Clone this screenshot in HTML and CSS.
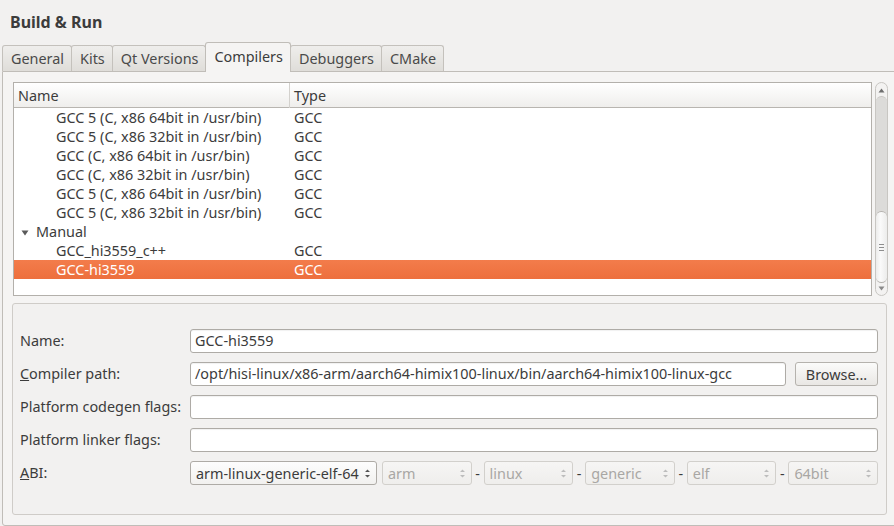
FILE: index.html
```html
<!DOCTYPE html>
<html lang="en">
<head>
    <meta charset="UTF-8">
    <title>Build &amp; Run</title>
    <link rel="stylesheet" href="styles.css">
</head>
<body>
<h1 class="title">Build &amp; Run</h1>

<!-- tab bar -->
<div class="tabs">
    <div class="tab">General</div>
    <div class="tab">Kits</div>
    <div class="tab">Qt Versions</div>
    <div class="tab active">Compilers</div>
    <div class="tab">Debuggers</div>
    <div class="tab">CMake</div>
</div>

<div class="pane">
    <div class="listbox">
        <div class="tree">
            <div class="thead">
                <div class="th name-col">Name</div>
                <div class="th">Type</div>
            </div>
            <div class="row"><div class="cell child">GCC 5 (C, x86 64bit in /usr/bin)</div><div class="cell">GCC</div></div>
            <div class="row"><div class="cell child">GCC 5 (C, x86 32bit in /usr/bin)</div><div class="cell">GCC</div></div>
            <div class="row"><div class="cell child">GCC (C, x86 64bit in /usr/bin)</div><div class="cell">GCC</div></div>
            <div class="row"><div class="cell child">GCC (C, x86 32bit in /usr/bin)</div><div class="cell">GCC</div></div>
            <div class="row"><div class="cell child">GCC 5 (C, x86 64bit in /usr/bin)</div><div class="cell">GCC</div></div>
            <div class="row"><div class="cell child">GCC 5 (C, x86 32bit in /usr/bin)</div><div class="cell">GCC</div></div>
            <div class="row">
                <div class="cell group"><svg class="expander" width="8" height="6" viewBox="0 0 8 6"><path d="M0.5 0.5 L7.5 0.5 L4 5.5 Z" fill="#5a5a5a"/></svg>Manual</div>
                <div class="cell"></div>
            </div>
            <div class="row"><div class="cell child">GCC_hi3559_c++</div><div class="cell">GCC</div></div>
            <div class="row selected"><div class="cell child">GCC-hi3559</div><div class="cell">GCC</div></div>
        </div>

        <!-- vertical scrollbar -->
        <div class="scrollbar">
            <svg class="sb-arrow" width="7" height="5" viewBox="0 0 7 5"><path d="M0.5 4.5 L3.5 0.5 L6.5 4.5 Z" fill="#6e6e6e"/></svg>
            <div class="trough"></div>
            <div class="thumb">
                <span class="grip"></span>
                <span class="grip"></span>
                <span class="grip"></span>
            </div>
            <svg class="sb-arrow" width="7" height="5" viewBox="0 0 7 5"><path d="M0.5 0.5 L6.5 0.5 L3.5 4.5 Z" fill="#8a8a8a"/></svg>
        </div>
    </div>

    <div class="details">
        <div class="form">
            <label class="lbl">Name:</label>
            <div class="field"><div class="input">GCC-hi3559</div></div>

            <label class="lbl"><u>C</u>ompiler path:</label>
            <div class="field">
                <div class="input">/opt/hisi-linux/x86-arm/aarch64-himix100-linux/bin/aarch64-himix100-linux-gcc</div>
                <button class="btn">Browse...</button>
            </div>

            <label class="lbl">Platform codegen flags:</label>
            <div class="field"><div class="input"></div></div>

            <label class="lbl">Platform linker flags:</label>
            <div class="field"><div class="input"></div></div>

            <label class="lbl"><u>A</u>BI:</label>
            <div class="field abi">
                <div class="combo main">
                    <span>arm-linux-generic-elf-64</span>
                    <svg class="spin" width="7" height="11" viewBox="0 0 7 11"><path d="M1 4 L3.5 1.5 L6 4 Z M1 7 L3.5 9.5 L6 7 Z" fill="#555"/></svg>
                </div>
                <div class="combo off">
                    <span>arm</span>
                    <svg class="spin" width="7" height="11" viewBox="0 0 7 11"><path d="M1 4 L3.5 1.5 L6 4 Z M1 7 L3.5 9.5 L6 7 Z" fill="#bdbdbd"/></svg>
                </div>
                <span class="dash">-</span>
                <div class="combo off">
                    <span>linux</span>
                    <svg class="spin" width="7" height="11" viewBox="0 0 7 11"><path d="M1 4 L3.5 1.5 L6 4 Z M1 7 L3.5 9.5 L6 7 Z" fill="#bdbdbd"/></svg>
                </div>
                <span class="dash">-</span>
                <div class="combo off">
                    <span>generic</span>
                    <svg class="spin" width="7" height="11" viewBox="0 0 7 11"><path d="M1 4 L3.5 1.5 L6 4 Z M1 7 L3.5 9.5 L6 7 Z" fill="#bdbdbd"/></svg>
                </div>
                <span class="dash">-</span>
                <div class="combo off">
                    <span>elf</span>
                    <svg class="spin" width="7" height="11" viewBox="0 0 7 11"><path d="M1 4 L3.5 1.5 L6 4 Z M1 7 L3.5 9.5 L6 7 Z" fill="#bdbdbd"/></svg>
                </div>
                <span class="dash">-</span>
                <div class="combo off">
                    <span>64bit</span>
                    <svg class="spin" width="7" height="11" viewBox="0 0 7 11"><path d="M1 4 L3.5 1.5 L6 4 Z M1 7 L3.5 9.5 L6 7 Z" fill="#bdbdbd"/></svg>
                </div>
            </div>
        </div>
    </div>
</div>
</body>
</html>
```

FILE: styles.css
```css
body {
    font-family: "Noto Sans", "Open Sans", sans-serif;
    font-size: 14.4px;
    color: #3c3c3c;
    background-color: #f2f1f0;
    margin: 0;
    padding: 0;
    width: 894px;
    height: 526px;
    overflow: hidden;
}
.title {
    margin: 0;
    height: 30px;
    padding: 12px 10px 0;
    font-size: 16px;
    line-height: 20px;
    font-weight: bold;
    color: #3c3c3c;
}
.tabs {
    display: flex;
    align-items: flex-end;
    height: 29px;
    padding-left: 2px;
    position: relative;
    z-index: 1;
}
.tab {
    height: 25px;
    line-height: 25px;
    padding: 0 7px 0 8px;
    margin-right: -1px;
    border: 1px solid #c4c1bc;
    border-bottom: none;
    border-radius: 3px 3px 0 0;
    background: linear-gradient(#efeeec, #dfddd9);
    color: #4a4a4a;
}
.tab.active {
    height: 29px;
    line-height: 28px;
    margin-bottom: -1px;
    background: #f5f4f3;
    border-color: #c0bdb8;
    color: #3c3c3c;
}
.pane {
    margin-left: 2px;
    width: 879px;
    height: 443px;
    border: 1px solid #c0bdb8;
    border-radius: 0 3px 3px 3px;
    background-color: #f5f4f3;
    padding: 10px 5px 0 10px;
}
.listbox {
    display: flex;
    height: 214px;
}
.tree {
    width: 857px;
    border: 1px solid #b3b0ab;
    background-color: #ffffff;
}
.thead {
    display: grid;
    grid-template-columns: 276px 1fr;
    height: 24px;
    background: linear-gradient(#ffffff, #efeeec);
    border-bottom: 1px solid #b8b5b0;
}
.th {
    line-height: 25px;
    padding-left: 4px;
}
.name-col {
    border-right: 1px solid #d3d1cd;
}
.row {
    display: grid;
    grid-template-columns: 277px 1fr;
    height: 19px;
    line-height: 19px;
}
.cell {
    padding-left: 3px;
    white-space: nowrap;
}
.cell.child {
    padding-left: 42px;
}
.cell.group {
    padding-left: 7px;
}
.expander {
    margin-right: 7px;
    vertical-align: 1px;
}
.row.selected {
    background: linear-gradient(#f37c4b, #ed6f3d);
    color: #ffffff;
}
.scrollbar {
    width: 11px;
    margin-left: 3px;
    border: 1px solid #c8c6c2;
    border-radius: 7px;
    background-color: #f3f2f1;
    display: flex;
    flex-direction: column;
    align-items: center;
    overflow: hidden;
}
.sb-arrow {
    flex: none;
    margin: 5px 0 3px;
}
.scrollbar .sb-arrow:last-child {
    margin: 3px 0 4px;
}
.trough {
    flex: 1;
    width: 11px;
    background-color: #dcdbd9;
    border-top: 1px solid #c8c6c2;
    border-radius: 6px 6px 0 0;
}
.thumb {
    height: 72px;
    width: 11px;
    box-sizing: border-box;
    border: 1px solid #b4b2ae;
    border-left: none;
    border-right: none;
    border-radius: 6px;
    background: linear-gradient(90deg, #ececeb, #fafafa 40%, #ececeb);
    display: flex;
    flex-direction: column;
    align-items: center;
    justify-content: center;
    gap: 2px;
    margin-top: -6px;
}
.grip {
    width: 5px;
    height: 1px;
    background-color: #8e8e8e;
}
.details {
    margin: 7px 0 0 -1px;
    width: 873px;
    height: 210px;
    border: 1px solid #cfccc8;
    border-radius: 3px;
    background-color: #f2f1f0;
}
.form {
    display: grid;
    grid-template-columns: 170px 1fr;
    row-gap: 9px;
    padding: 25px 8px 0 7px;
}
.lbl {
    line-height: 23px;
    color: #3c3c3c;
    white-space: nowrap;
}
.field {
    display: flex;
    gap: 9px;
}
.input {
    flex: 1;
    height: 22px;
    line-height: 22px;
    padding-left: 4px;
    border: 1px solid #aeaba6;
    border-radius: 3px;
    background-color: #ffffff;
    box-shadow: inset 0 1px 1px rgba(0, 0, 0, 0.06);
    white-space: nowrap;
    overflow: hidden;
}
.btn {
    width: 83px;
    height: 24px;
    padding: 0;
    font-family: inherit;
    font-size: 14.4px;
    color: #3c3c3c;
    border: 1px solid #b5b2ad;
    border-radius: 3px;
    background: linear-gradient(#fbfbfa, #e9e7e4);
}
.abi {
    gap: 0;
    align-items: center;
}
.combo {
    flex: 1;
    height: 22px;
    display: flex;
    align-items: center;
    justify-content: space-between;
    padding: 0 5px;
    border: 1px solid #d2d0cc;
    border-radius: 3px;
    background: linear-gradient(#f6f5f4, #efeeec);
    color: #a9a7a4;
}
.combo.main {
    flex: none;
    width: 175px;
    margin-right: 5px;
    border-color: #aeaba6;
    background: linear-gradient(#fdfdfd, #f2f1ef);
    color: #3c3c3c;
}
.spin {
    flex: none;
}
.dash {
    width: 12px;
    text-align: center;
    color: #3c3c3c;
}
```
